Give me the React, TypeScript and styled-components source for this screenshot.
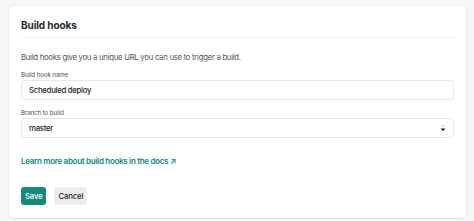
import { useState } from 'react'
import styled, { createGlobalStyle } from 'styled-components'

const GlobalStyle = createGlobalStyle`
  html, body {
    margin: 0;
    padding: 0;
    background: #f6f8f8;
    font-family: Inter, 'Noto Sans', sans-serif;
    color: #1f2a2e;
  }
  * { box-sizing: border-box; }
`

const Page = styled.div`
  padding: 6px 8px 4px 9px;
`

const Card = styled.section`
  background: #fff;
  border-radius: 4px;
  box-shadow: 0 0 0 1px rgba(0, 0, 0, 0.035), 0 1px 2px rgba(0, 0, 0, 0.06);
  padding: 12px 12px 13px 12px;
  display: flex;
  flex-direction: column;
`

const Title = styled.h2`
  margin: 0;
  font-size: 10px;
  font-weight: 700;
  letter-spacing: -0.1px;
  line-height: 14px;
  padding-bottom: 5px;
  border-bottom: 1px solid #eff1f1;
`

const Description = styled.p`
  margin: 13px 0 0;
  font-size: 7.8px;
  letter-spacing: -0.3px;
  line-height: 12px;
  color: #53585b;
`

const Field = styled.label<{ $top: number }>`
  display: flex;
  flex-direction: column;
  margin-top: ${(p) => p.$top}px;
`

const Label = styled.span`
  font-size: 6.2px;
  letter-spacing: -0.1px;
  line-height: 8px;
  color: #4a5154;
  margin-bottom: 1px;
`

const Input = styled.input`
  height: 20px;
  border: 1px solid #e6e8e9;
  border-radius: 3px;
  padding: 0 7px;
  font-family: inherit;
  font-size: 7.8px;
  letter-spacing: -0.3px;
  font-weight: 500;
  color: #1f2428;
  background: #fff;
  outline: none;
`

const SelectWrap = styled.div`
  position: relative;
  display: flex;
`

const Select = styled.select`
  flex: 1;
  appearance: none;
  height: 20px;
  border: 1px solid #e6e8e9;
  border-radius: 3px;
  padding: 0 7px;
  font-family: inherit;
  font-size: 7.8px;
  letter-spacing: -0.3px;
  font-weight: 500;
  color: #1f2428;
  background: #fff;
  outline: none;
`

const Caret = styled.svg`
  position: absolute;
  right: 8px;
  top: 6px;
  pointer-events: none;
`

const DocsLink = styled.a`
  margin-top: 17px;
  font-size: 8px;
  font-weight: 600;
  letter-spacing: -0.3px;
  line-height: 12px;
  color: #0d8a7c;
  text-decoration: none;
`

const Actions = styled.div`
  display: flex;
  gap: 8px;
  margin-top: 20px;
`

const Button = styled.button<{ $primary?: boolean }>`
  height: 18px;
  padding: 0 4px;
  border: none;
  border-radius: 3px;
  font-family: inherit;
  font-size: 7.8px;
  letter-spacing: -0.2px;
  font-weight: 500;
  cursor: pointer;
  background: ${(p) => (p.$primary ? '#15897b' : '#ededed')};
  color: ${(p) => (p.$primary ? '#ffffff' : '#1f2428')};
`

export default function App() {
  const [name, setName] = useState('Scheduled deploy')
  const [branch, setBranch] = useState('master')

  return (
    <>
      <GlobalStyle />
      <Page>
        <Card>
          <Title>Build hooks</Title>
          <Description>
            Build hooks give you a unique URL you can use to trigger a build.
          </Description>

          <Field $top={8}>
            <Label>Build hook name</Label>
            <Input value={name} onChange={(e) => setName(e.target.value)} />
          </Field>

          <Field $top={9}>
            <Label>Branch to build</Label>
            <SelectWrap>
              <Select value={branch} onChange={(e) => setBranch(e.target.value)}>
                <option value='master'>master</option>
              </Select>
              <Caret width='6' height='8' viewBox='0 0 6 8'>
                <path d='M1 3 L3 1 L5 3' fill='none' stroke='#c8cbcc' strokeWidth='0.9' />
                <path d='M0.6 4.6 L3 7.2 L5.4 4.6 Z' fill='#222' />
              </Caret>
            </SelectWrap>
          </Field>

          <DocsLink href='#'>Learn more about build hooks in the docs ↗</DocsLink>

          <Actions>
            <Button $primary>Save</Button>
            <Button>Cancel</Button>
          </Actions>
        </Card>
      </Page>
    </>
  )
}
